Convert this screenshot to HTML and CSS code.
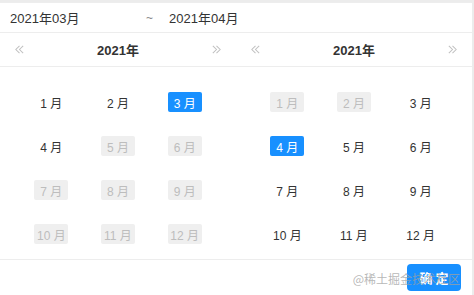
FILE: index.html
```html
<!DOCTYPE html>
<html lang="zh">
<head>
<meta charset="utf-8">
<link rel="stylesheet" href="styles.css">
</head>
<body>
<div class="picker">
  <div class="inputs">
    <span class="input-start">2021年03月</span>
    <span class="sep">~</span>
    <span class="input-end">2021年04月</span>
  </div>
  <div class="panels">
    <div class="panel">
      <div class="panel-head">
        <svg class="arrow" viewBox="0 0 12 12" width="11" height="11"><path d="M6 2 L2 6 L6 10 M10 2 L6 6 L10 10" /></svg>
        <span class="title">2021年</span>
        <svg class="arrow" viewBox="0 0 12 12" width="11" height="11"><path d="M2 2 L6 6 L2 10 M6 2 L10 6 L6 10" /></svg>
      </div>
      <div class="grid">
        <div class="cell"><span class="m">1 月</span></div>
        <div class="cell"><span class="m">2 月</span></div>
        <div class="cell"><span class="m active">3 月</span></div>
        <div class="cell"><span class="m">4 月</span></div>
        <div class="cell"><span class="m disabled">5 月</span></div>
        <div class="cell"><span class="m disabled">6 月</span></div>
        <div class="cell"><span class="m disabled">7 月</span></div>
        <div class="cell"><span class="m disabled">8 月</span></div>
        <div class="cell"><span class="m disabled">9 月</span></div>
        <div class="cell"><span class="m disabled">10 月</span></div>
        <div class="cell"><span class="m disabled">11 月</span></div>
        <div class="cell"><span class="m disabled">12 月</span></div>
      </div>
    </div>
    <div class="panel">
      <div class="panel-head">
        <svg class="arrow" viewBox="0 0 12 12" width="11" height="11"><path d="M6 2 L2 6 L6 10 M10 2 L6 6 L10 10" /></svg>
        <span class="title">2021年</span>
        <svg class="arrow" viewBox="0 0 12 12" width="11" height="11"><path d="M2 2 L6 6 L2 10 M6 2 L10 6 L6 10" /></svg>
      </div>
      <div class="grid">
        <div class="cell"><span class="m disabled">1 月</span></div>
        <div class="cell"><span class="m disabled">2 月</span></div>
        <div class="cell"><span class="m">3 月</span></div>
        <div class="cell"><span class="m active">4 月</span></div>
        <div class="cell"><span class="m">5 月</span></div>
        <div class="cell"><span class="m">6 月</span></div>
        <div class="cell"><span class="m">7 月</span></div>
        <div class="cell"><span class="m">8 月</span></div>
        <div class="cell"><span class="m">9 月</span></div>
        <div class="cell"><span class="m">10 月</span></div>
        <div class="cell"><span class="m">11 月</span></div>
        <div class="cell"><span class="m">12 月</span></div>
      </div>
    </div>
  </div>
  <div class="footer">
    <button class="ok">确 定</button>
    <span class="watermark">@稀土掘金技术社区</span>
  </div>
</div>
</body>
</html>
```
FILE: styles.css
```css
html, body {
  margin: 0;
  padding: 0;
}
body {
  background: #ececec;
  font-family: "Liberation Sans", "Noto Sans CJK SC", sans-serif;
  color: #333;
  width: 474px;
  height: 295px;
  overflow: hidden;
}
.picker {
  position: relative;
  width: 472px;
  height: 293px;
  margin-top: 2px;
  background: #fff;
  border-top: 1px solid #ededed;
  box-sizing: border-box;
}
.inputs {
  display: flex;
  align-items: center;
  height: 29px;
  border-bottom: 1px solid #ededed;
  font-size: 13px;
  color: #333;
  padding-left: 10px;
}
.input-start {
  width: 136px;
}
.sep {
  width: 23px;
  color: #888;
  font-size: 12px;
}
.panels {
  display: flex;
}
.panel {
  width: 236px;
}
.panel-head {
  display: flex;
  align-items: center;
  justify-content: space-between;
  height: 33px;
  padding: 0 14px;
  border-bottom: 1px solid #ededed;
}
.arrow {
  fill: none;
  stroke: #c0c0c0;
  stroke-width: 1.1;
}
.title {
  font-size: 13px;
  font-weight: 600;
  color: #333;
}
.grid {
  display: grid;
  grid-template-columns: repeat(3, 1fr);
  grid-auto-rows: 44px;
  padding: 13px 18px 3px;
}
.cell {
  display: flex;
  align-items: center;
  justify-content: center;
}
.m {
  display: flex;
  align-items: center;
  justify-content: center;
  width: 34px;
  height: 20px;
  font-size: 12px;
  color: #333;
  border-radius: 2px;
}
.m.active {
  background: #1890ff;
  color: #fff;
}
.m.disabled {
  background: #efefef;
  color: #bdbdbd;
}
.footer {
  position: relative;
  display: flex;
  justify-content: flex-end;
  align-items: center;
  height: 34px;
  border-top: 1px solid #ededed;
  padding-right: 11px;
}
.ok {
  width: 54px;
  height: 27px;
  border: none;
  border-radius: 4px;
  background: #1890ff;
  color: #fff;
  font-family: "Noto Sans CJK SC", sans-serif;
  font-size: 13px;
  font-weight: 600;
  padding: 0;
}
.watermark {
  position: absolute;
  right: 12px;
  top: 10px;
  font-family: "Noto Sans CJK SC", sans-serif;
  font-size: 12px;
  color: rgba(160, 160, 160, 0.75);
  pointer-events: none;
}
```
